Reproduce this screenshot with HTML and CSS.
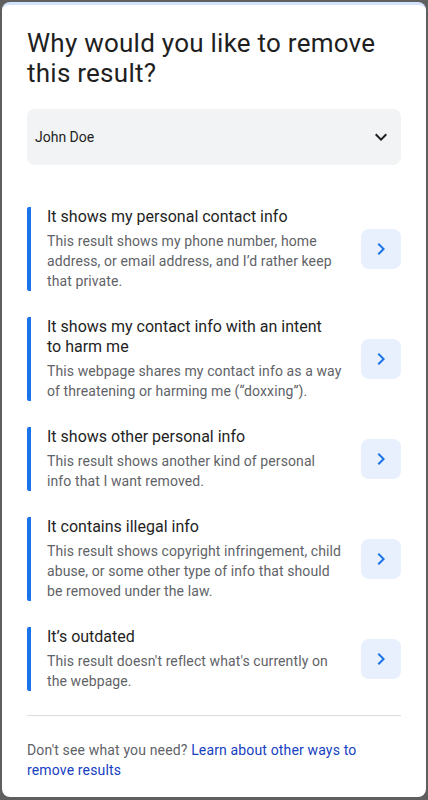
FILE: index.html
```html
<!DOCTYPE html>
<html lang="en">
<head>
<meta charset="utf-8">
<title>Remove result</title>
<link rel="stylesheet" href="styles.css">
</head>
<body>
<div class="page">
  <div class="dialog">
    <h1 class="title">Why would you like to remove this result?</h1>
    <div class="select">
      <span class="select-value">John Doe</span>
      <svg class="select-icon" viewBox="0 0 24 24" width="24" height="24"><path d="M16.59 8.59L12 13.17 7.41 8.59 6 10l6 6 6-6z"/></svg>
    </div>
    <ul class="options">
      <li class="option">
        <div class="option-text">
          <div class="option-title">It shows my personal contact info</div>
          <div class="option-desc">This result shows my phone number, home address, or email address, and I’d rather keep that private.</div>
        </div>
        <button class="option-btn" aria-label="Select"><svg viewBox="0 0 24 24" width="24" height="24"><path d="M10 6L8.59 7.41 13.17 12l-4.58 4.59L10 18l6-6z"/></svg></button>
      </li>
      <li class="option">
        <div class="option-text">
          <div class="option-title">It shows my contact info with an intent to harm me</div>
          <div class="option-desc">This webpage shares my contact info as a way of threatening or harming me (“doxxing”).</div>
        </div>
        <button class="option-btn" aria-label="Select"><svg viewBox="0 0 24 24" width="24" height="24"><path d="M10 6L8.59 7.41 13.17 12l-4.58 4.59L10 18l6-6z"/></svg></button>
      </li>
      <li class="option">
        <div class="option-text">
          <div class="option-title">It shows other personal info</div>
          <div class="option-desc">This result shows another kind of personal info that I want removed.</div>
        </div>
        <button class="option-btn" aria-label="Select"><svg viewBox="0 0 24 24" width="24" height="24"><path d="M10 6L8.59 7.41 13.17 12l-4.58 4.59L10 18l6-6z"/></svg></button>
      </li>
      <li class="option">
        <div class="option-text">
          <div class="option-title">It contains illegal info</div>
          <div class="option-desc">This result shows copyright infringement, child abuse, or some other type of info that should be removed under the law.</div>
        </div>
        <button class="option-btn" aria-label="Select"><svg viewBox="0 0 24 24" width="24" height="24"><path d="M10 6L8.59 7.41 13.17 12l-4.58 4.59L10 18l6-6z"/></svg></button>
      </li>
      <li class="option">
        <div class="option-text">
          <div class="option-title">It’s outdated</div>
          <div class="option-desc">This result doesn't reflect what's currently on the webpage.</div>
        </div>
        <button class="option-btn" aria-label="Select"><svg viewBox="0 0 24 24" width="24" height="24"><path d="M10 6L8.59 7.41 13.17 12l-4.58 4.59L10 18l6-6z"/></svg></button>
      </li>
    </ul>
    <hr class="divider">
    <p class="footer">Don't see what you need? <a class="footer-link" href="#">Learn about other ways to remove results</a></p>
  </div>
</div>
</body>
</html>
```
FILE: styles.css
```css
* { box-sizing: border-box; }
html, body {
  margin: 0;
  padding: 0;
  background: #5f5f5f;
}
body {
  font-family: Roboto, "Noto Sans", Arial, sans-serif;
  color: #1f1f1f;
}
.page {
  padding: 2px 2px 3px 2px;
  height: 800px;
}
.dialog {
  background: #fff;
  border-top: 3px solid #d3e3fd;
  border-radius: 8px;
  height: 795px;
  padding: 23px 25px 0 25px;
  overflow: hidden;
}
.title {
  margin: 0;
  font-size: 26px;
  line-height: 30px;
  font-weight: 400;
  letter-spacing: 0.25px;
  color: #1f1f1f;
}
.select {
  margin-top: 21px;
  height: 56px;
  background: #f1f3f4;
  border-radius: 8px;
  display: flex;
  align-items: center;
  justify-content: space-between;
  padding: 0 8px 0 8px;
}
.select-value {
  font-size: 14px;
  color: #1f1f1f;
}
.select-icon {
  fill: #1f1f1f;
}
.options {
  list-style: none;
  margin: 42px 0 0 0;
  padding: 0;
  display: flex;
  flex-direction: column;
  gap: 26px;
}
.option {
  display: flex;
  align-items: center;
  gap: 18px;
  border-left: 4px solid #1a73e8;
  border-radius: 2px;
  padding-left: 16px;
}
.option-text {
  flex: 1;
  min-width: 0;
}
.option-title {
  font-size: 16px;
  line-height: 20px;
  padding-right: 7px;
  color: #1f1f1f;
}
.option-desc {
  margin-top: 4px;
  font-size: 14px;
  line-height: 20px;
  letter-spacing: 0.1px;
  color: #5f6368;
}
.option-btn {
  flex: none;
  width: 40px;
  height: 40px;
  border: none;
  border-radius: 8px;
  background: #e8f0fe;
  display: flex;
  align-items: center;
  justify-content: center;
  padding: 0;
}
.option-btn svg {
  fill: #1a73e8;
}
.divider {
  margin: 24px 0 0 0;
  border: none;
  border-top: 1px solid #dadce0;
  height: 0;
}
.footer {
  margin: 24px 0 0 0;
  font-size: 14px;
  line-height: 20px;
  letter-spacing: 0.15px;
  color: #5f6368;
}
.footer-link {
  color: #1640c2;
  text-decoration: none;
}
```
